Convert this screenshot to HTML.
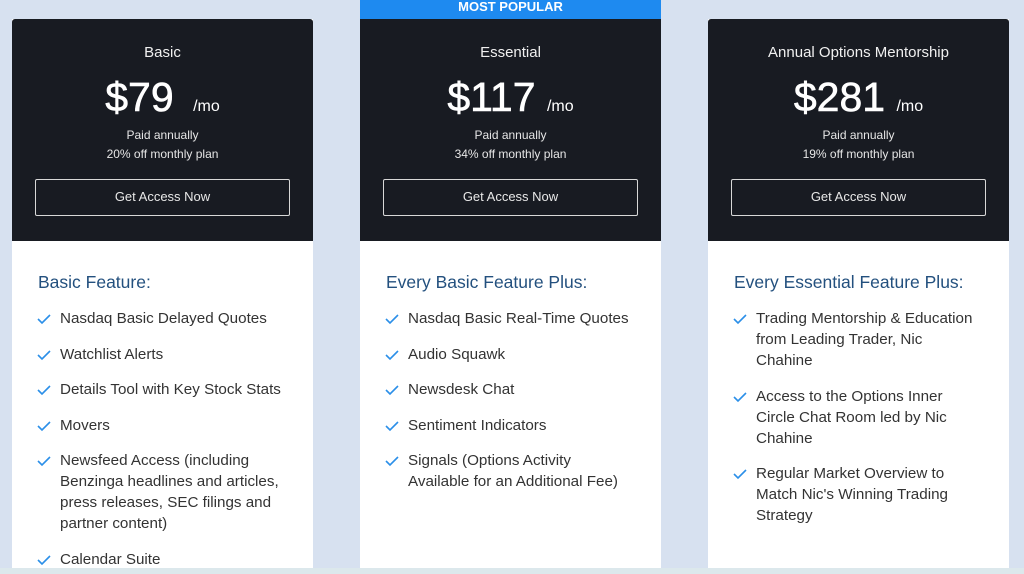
<!DOCTYPE html>
<html><head><style>
*{margin:0;padding:0;box-sizing:border-box}
html,body{width:1024px;height:574px;overflow:hidden}
body{background:#d7e1f0;font-family:"Liberation Sans",sans-serif;position:relative}
.strip{position:absolute;left:0;top:568px;width:1024px;height:6px;background:#dce8ec}
.card{position:absolute;top:19px;width:301px;height:549px;background:#fff}
.top{height:222px;background:#181b22;border-radius:3px 3px 0 0;color:#fff;text-align:center;position:relative}
.name{position:absolute;top:25px;left:0;right:0;font-size:15px;color:#f0f0f0}
.price{position:absolute;top:54px;left:0;right:0;font-size:41px;line-height:48px;-webkit-text-stroke:0.6px #fff}
.price span{font-size:16px;margin-left:8px;-webkit-text-stroke:0}
.paid{position:absolute;top:107px;left:0;right:0;font-size:12px;line-height:19px;color:#e6e6e6}
.btn{position:absolute;top:160px;left:23px;width:255px;height:37px;border:1.5px solid #d8d8d8;border-radius:2px;font-size:13px;line-height:34px;color:#e8e8e8}
h3{position:absolute;top:253px;left:26px;font-weight:normal;font-size:17.5px;color:#23507e;white-space:nowrap}
ul{list-style:none;position:absolute;top:289px;left:25px}
li{position:relative;padding-left:23px;font-size:15.2px;line-height:21px;color:#333;white-space:nowrap;margin-bottom:14.5px}
li svg{position:absolute;left:0;top:6px}
.banner{position:absolute;left:360px;top:0;width:301px;height:19px;background:#1e8af0;color:#fff;font-weight:bold;font-size:13px;text-align:center;line-height:14px}
</style></head><body>
<div class="strip"></div>
<div class="banner">MOST POPULAR</div>

<div class="card" style="left:12px">
<div class="top"><div class="name">Basic</div><div class="price">$79 <span>/mo</span></div><div class="paid">Paid annually<br>20% off monthly plan</div><div class="btn">Get Access Now</div></div>
<h3>Basic Feature:</h3>
<ul>
<li><svg width="14" height="11"><path d="M1 5l4 4 8-8" stroke="#2b8fe8" stroke-width="1.6" fill="none"/></svg>Nasdaq Basic Delayed Quotes</li>
<li><svg width="14" height="11"><path d="M1 5l4 4 8-8" stroke="#2b8fe8" stroke-width="1.6" fill="none"/></svg>Watchlist Alerts</li>
<li><svg width="14" height="11"><path d="M1 5l4 4 8-8" stroke="#2b8fe8" stroke-width="1.6" fill="none"/></svg>Details Tool with Key Stock Stats</li>
<li><svg width="14" height="11"><path d="M1 5l4 4 8-8" stroke="#2b8fe8" stroke-width="1.6" fill="none"/></svg>Movers</li>
<li><svg width="14" height="11"><path d="M1 5l4 4 8-8" stroke="#2b8fe8" stroke-width="1.6" fill="none"/></svg>Newsfeed Access (including<br>Benzinga headlines and articles,<br>press releases, SEC filings and<br>partner content)</li>
<li><svg width="14" height="11"><path d="M1 5l4 4 8-8" stroke="#2b8fe8" stroke-width="1.6" fill="none"/></svg>Calendar Suite</li>
</ul>
</div>

<div class="card" style="left:360px">
<div class="top" style="border-radius:0"><div class="name">Essential</div><div class="price">$117 <span style="margin-left:0">/mo</span></div><div class="paid">Paid annually<br>34% off monthly plan</div><div class="btn">Get Access Now</div></div>
<h3>Every Basic Feature Plus:</h3>
<ul>
<li><svg width="14" height="11"><path d="M1 5l4 4 8-8" stroke="#2b8fe8" stroke-width="1.6" fill="none"/></svg>Nasdaq Basic Real-Time Quotes</li>
<li><svg width="14" height="11"><path d="M1 5l4 4 8-8" stroke="#2b8fe8" stroke-width="1.6" fill="none"/></svg>Audio Squawk</li>
<li><svg width="14" height="11"><path d="M1 5l4 4 8-8" stroke="#2b8fe8" stroke-width="1.6" fill="none"/></svg>Newsdesk Chat</li>
<li><svg width="14" height="11"><path d="M1 5l4 4 8-8" stroke="#2b8fe8" stroke-width="1.6" fill="none"/></svg>Sentiment Indicators</li>
<li><svg width="14" height="11"><path d="M1 5l4 4 8-8" stroke="#2b8fe8" stroke-width="1.6" fill="none"/></svg>Signals (Options Activity<br>Available for an Additional Fee)</li>
</ul>
</div>

<div class="card" style="left:708px">
<div class="top"><div class="name">Annual Options Mentorship</div><div class="price">$281 <span style="margin-left:0">/mo</span></div><div class="paid">Paid annually<br>19% off monthly plan</div><div class="btn">Get Access Now</div></div>
<h3>Every Essential Feature Plus:</h3>
<ul>
<li><svg width="14" height="11"><path d="M1 5l4 4 8-8" stroke="#2b8fe8" stroke-width="1.6" fill="none"/></svg>Trading Mentorship &amp; Education<br>from Leading Trader, Nic<br>Chahine</li>
<li><svg width="14" height="11"><path d="M1 5l4 4 8-8" stroke="#2b8fe8" stroke-width="1.6" fill="none"/></svg>Access to the Options Inner<br>Circle Chat Room led by Nic<br>Chahine</li>
<li><svg width="14" height="11"><path d="M1 5l4 4 8-8" stroke="#2b8fe8" stroke-width="1.6" fill="none"/></svg>Regular Market Overview to<br>Match Nic's Winning Trading<br>Strategy</li>
</ul>
</div>
</body></html>
